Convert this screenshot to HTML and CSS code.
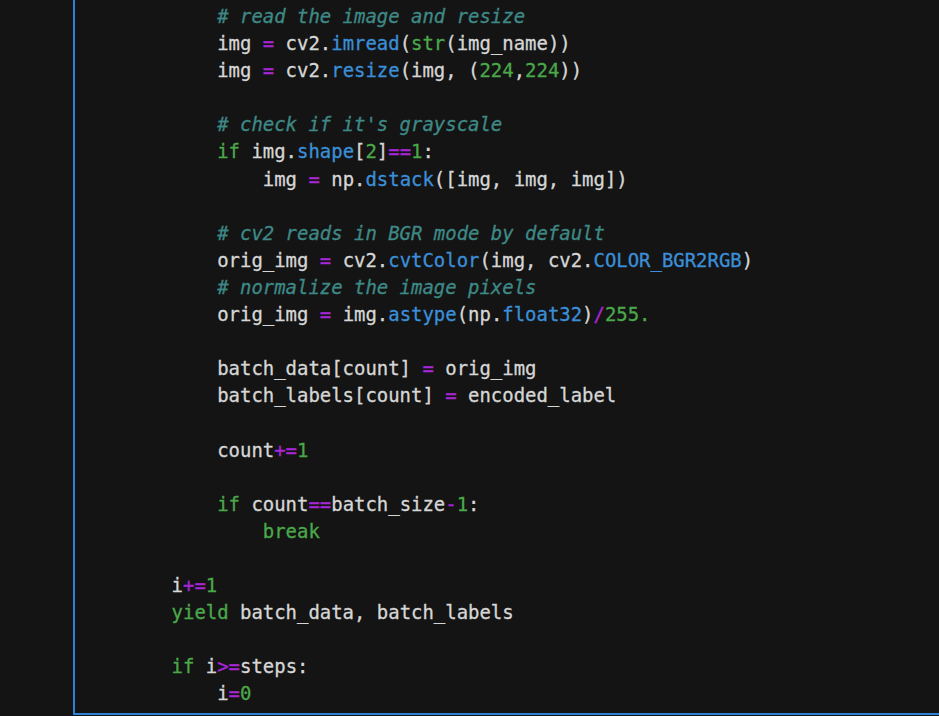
FILE: index.html
```html
<!DOCTYPE html>
<html>
<head>
<meta charset="utf-8">
<link rel="stylesheet" href="styles.css">
</head>
<body>
<div class="frame">
  <div class="gutter"></div>
  <div class="editor">
    <div class="code">
      <div class="ln i2"><span class="c"># read the image and resize</span></div>
      <div class="ln i2">img <span class="o">=</span> cv2.<span class="f">imread</span>(<span class="k">str</span>(img_name))</div>
      <div class="ln i2">img <span class="o">=</span> cv2.<span class="f">resize</span>(img, (<span class="n">224</span>,<span class="n">224</span>))</div>
      <div class="ln"></div>
      <div class="ln i2"><span class="c"># check if it's grayscale</span></div>
      <div class="ln i2"><span class="k">if</span> img.<span class="f">shape</span>[<span class="n">2</span>]<span class="o">==</span><span class="n">1</span>:</div>
      <div class="ln i3">img <span class="o">=</span> np.<span class="f">dstack</span>([img, img, img])</div>
      <div class="ln"></div>
      <div class="ln i2"><span class="c"># cv2 reads in BGR mode by default</span></div>
      <div class="ln i2">orig_img <span class="o">=</span> cv2.<span class="f">cvtColor</span>(img, cv2.<span class="f">COLOR_BGR2RGB</span>)</div>
      <div class="ln i2"><span class="c"># normalize the image pixels</span></div>
      <div class="ln i2">orig_img <span class="o">=</span> img.<span class="f">astype</span>(np.<span class="f">float32</span>)<span class="o">/</span><span class="n">255.</span></div>
      <div class="ln"></div>
      <div class="ln i2">batch_data[count] <span class="o">=</span> orig_img</div>
      <div class="ln i2">batch_labels[count] <span class="o">=</span> encoded_label</div>
      <div class="ln"></div>
      <div class="ln i2">count<span class="o">+=</span><span class="n">1</span></div>
      <div class="ln"></div>
      <div class="ln i2"><span class="k">if</span> count<span class="o">==</span>batch_size<span class="o">-</span><span class="n">1</span>:</div>
      <div class="ln i3"><span class="k">break</span></div>
      <div class="ln"></div>
      <div class="ln i1">i<span class="o">+=</span><span class="n">1</span></div>
      <div class="ln i1"><span class="k">yield</span> batch_data, batch_labels</div>
      <div class="ln"></div>
      <div class="ln i1"><span class="k">if</span> i<span class="o">&gt;=</span>steps:</div>
      <div class="ln i2">i<span class="o">=</span><span class="n">0</span></div>
    </div>
  </div>
</div>
</body>
</html>
```

FILE: styles.css
```css
html, body {
  margin: 0;
  padding: 0;
  background: #141414;
  overflow: hidden;
}

.frame {
  display: flex;
  width: 939px;
  height: 716px;
}

.gutter {
  width: 73px;
  flex: none;
}

.editor {
  flex: 1;
  height: 715px;
  box-sizing: border-box;
  border-left: 2px solid #2d82d6;
  border-bottom: 2px solid #2d82d6;
}

.code {
  padding: 3px 0 0 51px;
  font-family: "DejaVu Sans Mono", "Liberation Mono", monospace;
  font-size: 18.95px;
  line-height: 27.1px;
  color: #d6d6d6;
  -webkit-text-stroke: 0.3px currentColor;
}

.ln {
  height: 27.1px;
  white-space: pre;
}

.i1 { padding-left: 4ch; }
.i2 { padding-left: 8ch; }
.i3 { padding-left: 12ch; }

.c { color: #3e8986; font-style: italic; }
.o { color: #a626d6; }
.f { color: #3b8fd8; }
.k { color: #4ba84a; }
.n { color: #4ba84a; }
```
